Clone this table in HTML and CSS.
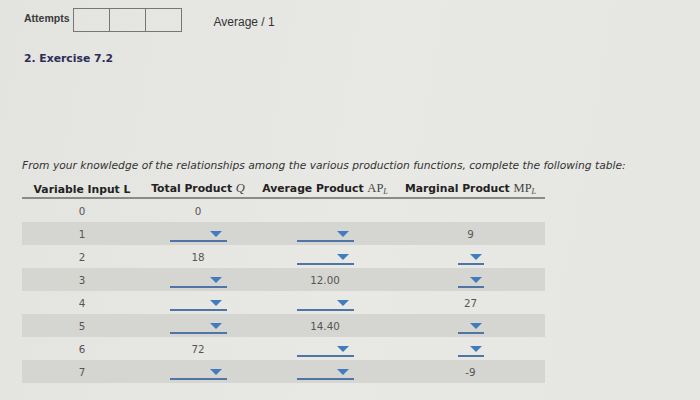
FILE: index.html
```html
<!DOCTYPE html>
<html>
<head>
<meta charset="utf-8">
<link rel="stylesheet" href="styles.css">
</head>
<body>
<div class="page">
  <div class="attempts-row">
    <span class="att-label">Attempts</span>
    <div class="boxes"><span class="box"></span><span class="box"></span><span class="box"></span></div>
    <span class="avg">Average / 1</span>
  </div>
  <h2 class="exercise">2. Exercise 7.2</h2>
  <p class="intro">From your knowledge of the relationships among the various production functions, complete the following table:</p>
  <div class="table">
    <div class="row head">
      <div class="cell">Variable Input L</div>
      <div class="cell">Total Product <span class="math">Q</span></div>
      <div class="cell">Average Product <span class="rm">AP<sub>L</sub></span></div>
      <div class="cell">Marginal Product <span class="rm">MP<sub>L</sub></span></div>
    </div>
    <div class="row">
      <div class="cell">0</div><div class="cell">0</div><div class="cell"></div><div class="cell"></div>
    </div>
    <div class="row alt">
      <div class="cell">1</div>
      <div class="cell"><span class="dd"><span class="tri"></span></span></div>
      <div class="cell"><span class="dd"><span class="tri"></span></span></div>
      <div class="cell">9</div>
    </div>
    <div class="row">
      <div class="cell">2</div>
      <div class="cell">18</div>
      <div class="cell"><span class="dd"><span class="tri"></span></span></div>
      <div class="cell"><span class="dd small"><span class="tri"></span></span></div>
    </div>
    <div class="row alt">
      <div class="cell">3</div>
      <div class="cell"><span class="dd"><span class="tri"></span></span></div>
      <div class="cell">12.00</div>
      <div class="cell"><span class="dd small"><span class="tri"></span></span></div>
    </div>
    <div class="row">
      <div class="cell">4</div>
      <div class="cell"><span class="dd"><span class="tri"></span></span></div>
      <div class="cell"><span class="dd"><span class="tri"></span></span></div>
      <div class="cell">27</div>
    </div>
    <div class="row alt">
      <div class="cell">5</div>
      <div class="cell"><span class="dd"><span class="tri"></span></span></div>
      <div class="cell">14.40</div>
      <div class="cell"><span class="dd small"><span class="tri"></span></span></div>
    </div>
    <div class="row">
      <div class="cell">6</div>
      <div class="cell">72</div>
      <div class="cell"><span class="dd"><span class="tri"></span></span></div>
      <div class="cell"><span class="dd small"><span class="tri"></span></span></div>
    </div>
    <div class="row alt">
      <div class="cell">7</div>
      <div class="cell"><span class="dd"><span class="tri"></span></span></div>
      <div class="cell"><span class="dd"><span class="tri"></span></span></div>
      <div class="cell">-9</div>
    </div>
  </div>
</div>
</body>
</html>
```

FILE: styles.css
```css
html, body {
  margin: 0;
  padding: 0;
  background: #e5e5e1;
}
.page {
  width: 700px;
  height: 400px;
  box-sizing: border-box;
  padding: 8px 0 0 22px;
  background: linear-gradient(100deg, #e3e3df 0%, #e8e8e4 50%, #e6e6e3 100%);
  font-family: "DejaVu Sans", Verdana, sans-serif;
  color: #333;
}
.attempts-row {
  display: flex;
  align-items: center;
  height: 24px;
  font-family: "Liberation Sans", Arial, sans-serif;
  font-size: 11.5px;
  color: #333;
}
.att-label {
  font-weight: bold;
  font-size: 10.5px;
  color: #3a3a3a;
  margin-left: 2px;
  margin-top: -4px;
}
.boxes {
  display: flex;
  margin-left: 3px;
  border: 1px solid #777;
  height: 22px;
}
.box {
  width: 35px;
  border-right: 1px solid #777;
}
.box:last-child { border-right: none; }
.avg {
  margin-left: 32px;
  margin-top: 4px;
  font-size: 12px;
  color: #333;
}
.exercise {
  margin: 20px 0 0 2px;
  font-size: 10.8px;
  font-weight: bold;
  color: #2c2c55;
  line-height: 14px;
}
.intro {
  margin: 93px 0 0 0;
  font-size: 10.7px;
  font-style: italic;
  color: #333;
  line-height: 14px;
}
.table {
  margin-top: 6px;
  width: 523px;
  font-size: 10.3px;
  color: #555;
}
.row {
  display: grid;
  grid-template-columns: 120px 112px 142px 149px;
  height: 23px;
  align-items: center;
}
.row.head {
  height: 20px;
  border-bottom: 2px solid #8a8a88;
  color: #222;
  font-weight: bold;
  font-size: 10.8px;
  align-items: end;
  padding-bottom: 1px;
  box-sizing: border-box;
}
.row.alt { background: #d5d5d2; }
.cell {
  text-align: center;
  white-space: nowrap;
}
.math {
  font-family: "Liberation Serif", "Times New Roman", serif;
  font-style: italic;
  font-weight: normal;
  font-size: 12.5px;
  color: #444;
}
.rm {
  font-family: "Liberation Serif", "Times New Roman", serif;
  font-weight: normal;
  font-size: 12.5px;
  color: #444;
}
.rm sub {
  font-style: italic;
  font-size: 8px;
  vertical-align: -2px;
}
.dd {
  display: inline-flex;
  justify-content: flex-end;
  align-items: center;
  box-sizing: border-box;
  width: 57px;
  height: 15px;
  padding-right: 5px;
  border-bottom: 2px solid #4f74a6;
  vertical-align: middle;
  margin-top: 2px;
}
.dd.small {
  width: 26px;
  padding-right: 2px;
}
.tri {
  width: 0;
  height: 0;
  border-left: 6px solid transparent;
  border-right: 6px solid transparent;
  border-top: 6px solid #3f7cc0;
}
```
